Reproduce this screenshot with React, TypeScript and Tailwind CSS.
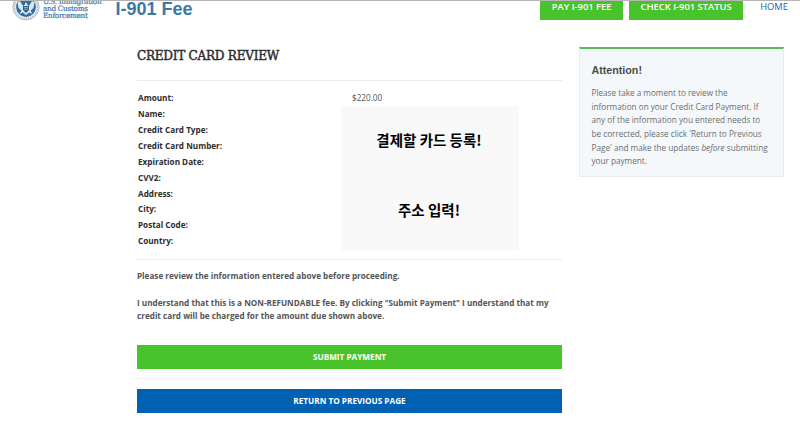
import React from 'react';

interface ReviewRow {
  label: string;
  value?: string;
}

const REVIEW_ROWS: ReviewRow[] = [
  { label: 'Amount:', value: '$220.00' },
  { label: 'Name:' },
  { label: 'Credit Card Type:' },
  { label: 'Credit Card Number:' },
  { label: 'Expiration Date:' },
  { label: 'CVV2:' },
  { label: 'Address:' },
  { label: 'City:' },
  { label: 'Postal Code:' },
  { label: 'Country:' },
];

const Seal: React.FC = () => (
  <svg width="28" height="28" viewBox="0 0 28 28" className="shrink-0">
    <circle cx="14" cy="14" r="13" fill="#e9edf1" stroke="#9aabbd" strokeWidth="0.8" />
    <circle cx="14" cy="14" r="11.4" fill="none" stroke="#b3b4c0" strokeWidth="1.2" strokeDasharray="1 1.1" />
    <circle cx="14" cy="14" r="9.9" fill="#2e6f9f" />
    {/* eagle */}
    <path d="M5.5 9 8 8l3 5 1.5-1L14 9l1.5 3 1.5 1 3-5 2.5 1-1 6-3 2.5 2 3.5-3.5-1.5L14 22l-3-2.5L7.5 21l2-3.5-3-2.5z" fill="#dde8f0" />
    <path d="M11 13h6v4l-3 3-3-3z" fill="#2f5d85" />
    <path d="M12.2 14.5h3.6M12.2 16.2h3.6" stroke="#e8eef3" strokeWidth="0.6" />
  </svg>
);

const Header: React.FC = () => (
  <header className="flex h-[21px] items-end justify-between overflow-hidden border-t border-[#b5b5b5] pl-[12px] pr-[12px]">
    <div className="flex items-end">
      <Seal />
      <div className="ml-[3px] w-[72.5px] whitespace-nowrap pb-[1.5px] font-['DejaVu_Serif'] text-[7.3px] leading-[7.3px] tracking-[-0.3px] text-[#3f78a5] [-webkit-text-stroke:0.2px_#3f78a5]">
        <p>U.S. Immigration</p>
        <p>and Customs</p>
        <p>Enforcement</p>
      </div>
      <p className="mb-[1px] whitespace-nowrap font-['Liberation_Sans'] text-[18px] font-bold leading-[22px] text-[#3a78a8]">I-901 Fee</p>
    </div>
    <nav className="flex items-end pb-px font-['Open_Sans'] text-[9.4px] leading-[14px]">
      <a className="mr-[6px] flex h-[30px] w-[83px] items-end justify-center bg-[#49c32c] pb-[6px] font-semibold text-white">PAY I-901 FEE</a>
      <a className="mr-[17px] flex h-[30px] w-[114px] items-end justify-center bg-[#49c32c] pb-[6px] font-semibold text-white">CHECK I-901 STATUS</a>
      <a className="h-5 font-medium text-[#2264ab]">HOME</a>
    </nav>
  </header>
);

const Sidebar: React.FC = () => (
  <aside className="h-[130px] w-[205px] border border-t-2 border-[#e6ebed] border-t-[#5cb85c] bg-[#f5f8fa] px-[11.5px] pt-[13px]">
    <h2 className="font-['Liberation_Sans'] text-[10.7px] font-bold leading-4 text-[#4c4c4c]">Attention!</h2>
    <p className="mt-[8px] whitespace-nowrap font-['Open_Sans'] text-[8.19px] leading-[13.65px] text-[#6b6e70]">
      Please take a moment to review the<br />
      information on your Credit Card Payment. If<br />
      any of the information you entered needs to<br />
      be corrected, please click 'Return to Previous<br />
      Page' and make the updates <em>before</em> submitting<br />
      your payment.
    </p>
  </aside>
);

const App: React.FC = () => {
  return (
    <div className="h-[421px] w-[800px] overflow-hidden bg-white font-['Open_Sans']">
      <Header />
      <div className="flex items-start gap-[17px] pl-[137px] pt-[26px]">
        <main className="w-[425px]">
          <h1 className="h-[33px] whitespace-nowrap font-['DejaVu_Serif'] text-[12.1px] leading-[18px] tracking-[-0.28px] text-[#2d2d2d] [-webkit-text-stroke:0.45px_#2d2d2d]">CREDIT CARD REVIEW</h1>

          <div className="relative h-[180px] border-y border-[#ebebeb] pl-[1px] pt-[9.4px]">
            {REVIEW_ROWS.map((row) => (
              <div key={row.label} className="flex h-[15.9px] items-center text-[8.17px] text-[#2d2d2d]">
                <span className="w-[214px] font-bold">{row.label}</span>
                {row.value && <span className="text-[#555]">{row.value}</span>}
              </div>
            ))}
            <div className="absolute left-[203.5px] top-[25px] h-[144px] w-[178px] bg-[#f9f9f9] text-center font-['Noto_Sans_CJK_KR',sans-serif] text-[14.5px] font-bold leading-5 text-black">
              <p className="-ml-px pt-[24px]">결제할 카드 등록!</p>
              <p className="-ml-px pt-[50px]">주소 입력!</p>
            </div>
          </div>

          <div className="whitespace-nowrap pt-[8.5px] text-[8.17px] font-bold leading-[13.6px] text-[#555]">
            <p>Please review the information entered above before proceeding.</p>
            <p className="mt-[13.6px]">
              I understand that this is a NON-REFUNDABLE fee. By clicking "Submit Payment" I understand that my<br />
              credit card will be charged for the amount due shown above.
            </p>
          </div>

          <button className="mt-[22px] block h-[24px] w-full bg-[#49c32c] text-[8.2px] font-bold text-white">SUBMIT PAYMENT</button>
          <hr className="mt-[9px] border-[#f0f0f0]" />
          <button className="mt-[10px] block h-[24px] w-full bg-[#0061b2] text-[8.2px] font-bold text-white">RETURN TO PREVIOUS PAGE</button>
        </main>
        <Sidebar />
      </div>
    </div>
  );
};

export default App;
